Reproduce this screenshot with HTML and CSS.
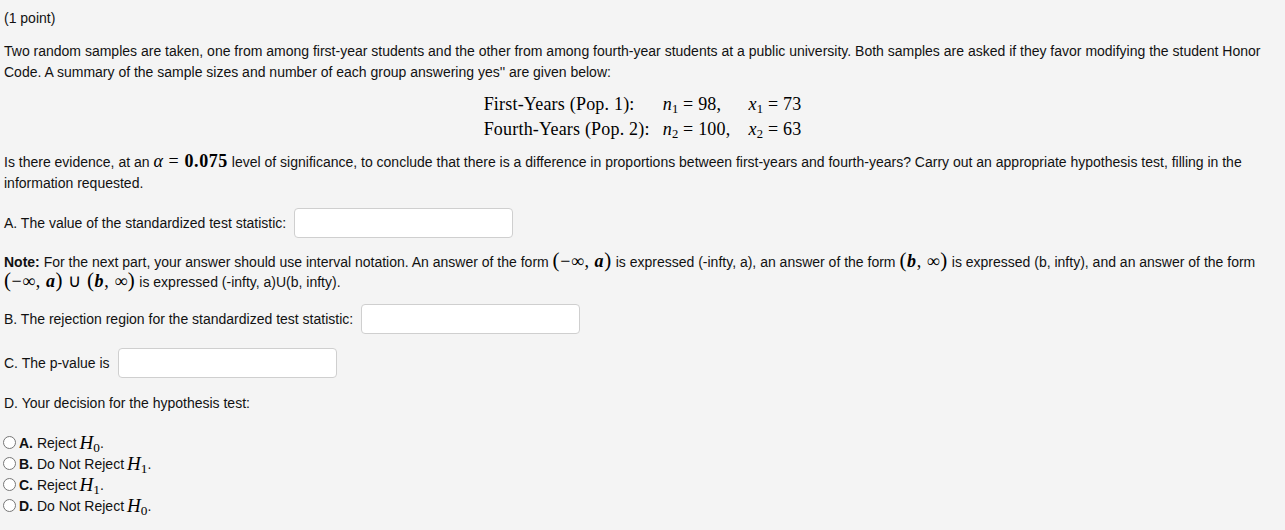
FILE: index.html
```html
<!DOCTYPE html>
<html>
<head>
<meta charset="utf-8">
<link rel="stylesheet" href="styles.css">
</head>
<body>
<div class="problem">
  <div class="points">(1 point)</div>
  <p class="para intro">Two random samples are taken, one from among first-year students and the other from among fourth-year students at a public university. Both samples are asked if they favor modifying the student Honor Code. A summary of the sample sizes and number of each group answering yes'' are given below:</p>

  <div class="display">
    <div class="mtable">
      <span class="mc label">First-Years (Pop. 1):</span>
      <span class="mc"><i>n</i><sub>1</sub> = 98,</span>
      <span class="mc col3"><i>x</i><sub>1</sub> = 73</span>
      <span class="mc label">Fourth-Years (Pop. 2):</span>
      <span class="mc"><i>n</i><sub>2</sub> = 100,</span>
      <span class="mc col3"><i>x</i><sub>2</sub> = 63</span>
    </div>
  </div>

  <p class="para">Is there evidence, at an <span class="m"><i>α</i> = <b>0.075</b></span> level of significance, to conclude that there is a difference in proportions between first-years and fourth-years? Carry out an appropriate hypothesis test, filling in the information requested.</p>

  <div class="row row-a">A. The value of the standardized test statistic: <span class="box"></span></div>

  <p class="para note"><b>Note:</b> For the next part, your answer should use interval notation. An answer of the form <span class="m"><span class="paren">(</span>−∞, <b><i>a</i></b><span class="paren">)</span></span> is expressed (-infty, a), an answer of the form <span class="m"><span class="paren">(</span><b><i>b</i></b>, ∞<span class="paren">)</span></span> is expressed (b, infty), and an answer of the form <span class="m"><span class="paren">(</span>−∞, <b><i>a</i></b><span class="paren">)</span> ∪ <span class="paren">(</span><b><i>b</i></b>, ∞<span class="paren">)</span></span> is expressed (-infty, a)U(b, infty).</p>

  <div class="row row-b">B. The rejection region for the standardized test statistic: <span class="box"></span></div>

  <div class="row row-c">C. The p-value is <span class="box"></span></div>

  <div class="row row-d">D. Your decision for the hypothesis test:</div>

  <div class="choices">
    <label class="choice"><span class="radio"></span><b>A.</b>&nbsp;Reject <span class="h"><i>H</i><sub>0</sub></span>.</label>
    <label class="choice"><span class="radio"></span><b>B.</b>&nbsp;Do Not Reject <span class="h"><i>H</i><sub>1</sub></span>.</label>
    <label class="choice"><span class="radio"></span><b>C.</b>&nbsp;Reject <span class="h"><i>H</i><sub>1</sub></span>.</label>
    <label class="choice"><span class="radio"></span><b>D.</b>&nbsp;Do Not Reject <span class="h"><i>H</i><sub>0</sub></span>.</label>
  </div>
</div>
</body>
</html>
```

FILE: styles.css
```css
html, body {
  margin: 0;
  padding: 0;
  background: #f4f4f4;
}
body {
  font-family: "Liberation Sans", Arial, sans-serif;
  font-size: 14px;
  color: #111;
}
.problem {
  padding: 8px 4px 0 4px;
}
.points {
  line-height: 20px;
}
.para {
  margin: 0;
  line-height: 21px;
}
.intro {
  margin-top: 13px;
}
.display {
  display: flex;
  justify-content: center;
  margin: 9px 0 11px 0;
}
.mtable {
  display: grid;
  grid-template-columns: auto auto auto;
  column-gap: 13px;
  row-gap: 1px;
  font-family: "Liberation Serif", "Times New Roman", serif;
  font-size: 18px;
  letter-spacing: 0.2px;
  line-height: 24px;
  color: #000;
}
.mc {
  white-space: nowrap;
}
.col3 {
  padding-left: 5px;
}
.mc i, .m i, .h i {
  font-style: italic;
}
sub {
  font-size: 70%;
  vertical-align: -3px;
  line-height: 0;
}
.m {
  font-family: "Liberation Serif", "Times New Roman", serif;
  font-size: 18px;
  letter-spacing: 0.6px;
  line-height: 0;
  color: #000;
}
.m b {
  font-weight: bold;
}
.paren {
  font-size: 21px;
  line-height: 0;
}
.row {
  display: flex;
  align-items: center;
  line-height: 20px;
}
.box {
  display: inline-block;
  width: 217px;
  height: 28px;
  margin-left: 8px;
  background: #fff;
  border: 1px solid #cfcfcf;
  border-radius: 4px;
}
.row-a {
  margin-top: 14px;
}
.note {
  margin-top: 14px;
  line-height: 20px;
}
.row-b {
  margin-top: 12px;
}
.row-c {
  margin-top: 14px;
}
.row-d {
  margin-top: 15px;
}
.choices {
  margin-top: 19px;
  display: flex;
  flex-direction: column;
}
.choice {
  display: flex;
  align-items: center;
  height: 21px;
  margin-left: -1px;
}
.choice b {
  font-weight: bold;
}
.radio {
  display: inline-block;
  width: 11px;
  height: 11px;
  border: 1px solid #767676;
  border-radius: 50%;
  background: #fff;
  margin-right: 3px;
}
.h {
  font-family: "Liberation Serif", "Times New Roman", serif;
  font-size: 19px;
  color: #000;
  margin-left: 3px;
}
```
